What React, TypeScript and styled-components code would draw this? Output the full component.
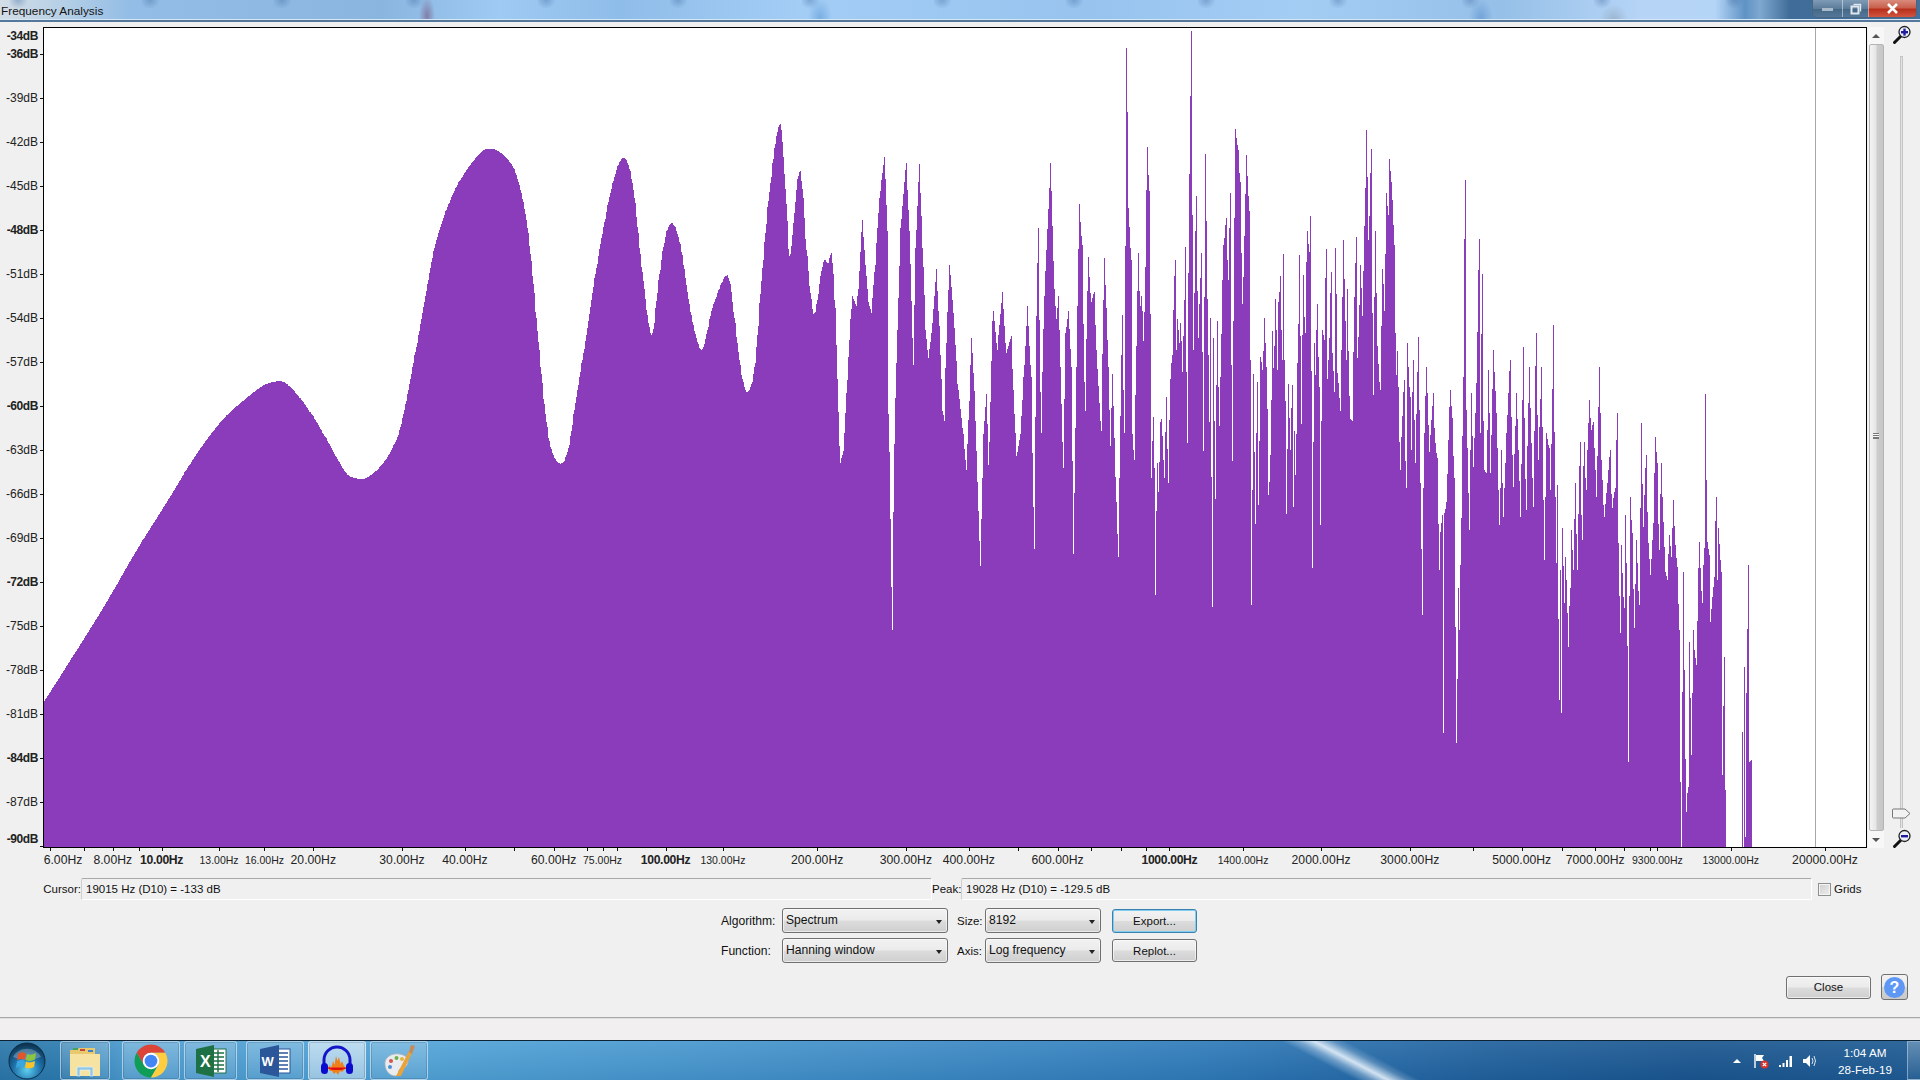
import React from "react";
import styled, { createGlobalStyle } from "styled-components";

const GlobalStyle = createGlobalStyle`
  html, body {
    margin: 0;
    padding: 0;
    width: 1920px;
    height: 1080px;
    overflow: hidden;
    background: #f0f0f0;
    font-family: "Liberation Sans", Arial, sans-serif;
    font-size: 12px;
    color: #111;
  }
  * { box-sizing: border-box; }
`;

// traced outline of the spectrum, [x, y] in the units of each trace
type Pt = [number, number];

const SMOOTH: Pt[] = [
  [7,1498],[60,1385],[120,1255],[180,1115],[240,985],[290,875],[340,785],[380,735],[410,703],[430,690],[455,688],
  [480,720],[510,775],[540,845],[570,915],[590,932],[610,930],[640,895],[665,835],[680,760],[700,620],[720,470],
  [740,330],[770,215],[800,145],[825,105],[840,98],[860,108],[885,150],[905,250],[920,420],[935,650],[950,830],
  [968,893],[985,865],[1000,740],[1020,570],[1040,390],[1065,210],[1087,122],[1105,175],[1120,350],[1141,570],
  [1155,430],[1168,320],[1181,287],[1195,340],[1215,510],[1232,603],[1242,580],[1258,490],[1283,418],[1295,510],
  [1310,670],[1322,712],[1335,640],[1350,380],[1365,170],[1382,36],[1392,200],[1399,368],[1408,260],[1420,155],
  [1432,370],[1445,515],[1458,420],[1465,380],[1472,388],[1479,367],[1485,500],
];

const MIDDLE: Pt[] = [
  [0,985],[10,950],[20,740],[30,560],[35,490],[45,520],[52,470],[62,265],[72,400],[80,510],[88,540],[98,400],[112,180],
  [125,80],[133,300],[137,840],[146,1478],[152,930],[158,690],[170,290],[185,97],[195,300],[205,695],[212,350],[222,100],
  [232,350],[240,590],[247,675],[257,600],[270,412],[278,580],[288,830],[292,860],[297,630],[307,398],[318,540],[330,750],
  [345,900],[354,1005],[362,800],[368,615],[375,720],[385,1040],[393,1290],[402,900],[410,780],[417,990],[427,565],
  [430,535],[440,650],[455,480],[465,660],[480,610],[485,770],[495,965],[505,900],[515,730],[525,520],[535,730],[544,1240],
  [550,550],[555,290],[563,895],[572,490],[590,97],[600,470],[606,560],[612,490],[625,1000],[632,600],[640,535],[648,700],
  [654,1255],[662,700],[670,220],[678,340],[686,830],[695,375],[703,510],[712,478],[718,650],[731,890],[740,377],[750,620],
  [757,935],[763,722],[772,1025],[779,1262],[790,548],[796,895],[803,-243],[808,230],[815,385],[818,900],[824,975],[830,640],
  [835,365],[840,520],[845,490],[851,625],[855,405],[860,50],[866,180],[868,545],[872,1030],[877,848],[880,1000],[883,1375],
  [888,985],[892,1070],[898,865],[901,855],[908,1030],[914,790],[919,1045],[925,735],[930,665],[938,383],[942,650],[946,560],
  [950,630],[954,572],[960,715],[963,610],[967,345],[972,925],[978,130],[980,-100],[983,-293],[988,250],[990,650],[997,195],
  [1003,615],[1012,365],[1018,950],[1023,72],[1030,500],[1034,865],[1038,555],[1042,1410],[1046,615],[1051,1090],[1056,565],
  [1062,875],[1066,730],[1071,445],[1075,340],[1081,260],[1087,445],[1093,185],[1098,980],[1107,-3],[1115,60],[1120,155],
  [1125,365],[1128,515],[1138,75],[1146,240],[1149,680],[1152,1405],[1158,722],[1163,1165],[1168,745],[1172,1110],[1178,670],
  [1184,710],[1189,555],[1192,630],[1198,825],[1201,1080],[1206,960],[1211,595],[1215,705],[1220,500],[1225,710],[1229,510],
  [1233,432],[1238,680],[1241,368],[1246,800],[1250,1135],[1256,750],[1261,945],[1266,755],[1269,1115],[1273,890],[1276,1020],
  [1282,690],[1287,370],[1292,870],[1297,430],[1302,600],[1308,300],[1314,360],[1318,255],[1323,1295],[1328,630],[1331,725],
  [1336,516],[1342,760],[1345,1168],[1351,590],[1356,620],[1361,352],[1366,735],[1370,615],[1375,420],[1380,660],[1384,775],
  [1388,350],[1394,720],[1401,830],[1410,325],[1418,680],[1420,470],[1428,855],[1435,860],[1440,495],[1446,315],[1450,675],
  [1458,400],[1463,550],[1471,170],[1474,0],[1481,325],[1487,57],[1493,785],[1499,300],[1505,640],[1512,770],[1520,410],
  [1525,535],[1530,185],[1535,250],[1538,87],[1545,155],[1552,340],[1557,725],[1562,655],
];

const TAIL: Pt[] = [
  [0,210],[5,110],[12,-60],[18,265],[22,-170],[30,-10],[33,150],[40,-120],[46,190],[55,-190],[62,250],[67,645],[72,100],
  [80,-100],[88,155],[100,-20],[105,130],[112,175],[118,510],[122,395],[127,345],[130,1000],[134,340],[140,305],[150,-30],
  [158,55],[162,235],[170,1030],[176,565],[178,690],[184,355],[190,-70],[195,-660],[200,30],[208,390],[214,-20],[220,200],
  [230,-50],[237,-483],[242,100],[246,-378],[252,210],[260,220],[266,-90],[272,220],[280,-150],[290,40],[298,375],[305,150],
  [310,350],[320,100],[330,-120],[340,260],[350,-20],[362,350],[370,-160],[378,330],[388,-100],[400,320],[408,-200],[415,180],
  [425,-100],[433,480],[440,100],[447,145],[452,270],[461,-225],[465,290],[470,490],[473,255],[477,900],[481,510],[484,940],
  [488,385],[493,610],[497,470],[500,540],[505,740],[510,565],[515,390],[520,510],[526,250],[532,510],[540,125],[546,420],
  [552,125],[558,270],[568,0],[574,90],[580,65],[590,290],[598,-100],[605,180],[612,350],[620,280],[630,150],[636,325],
  [645,265],[652,40],[655,430],[661,700],[664,435],[672,625],[676,345],[680,490],[686,1085],[690,290],[697,400],[703,685],
  [710,420],[717,615],[720,325],[724,70],[730,380],[738,165],[745,430],[752,525],[760,370],[766,110],[772,190],[777,450],
  [784,190],[790,365],[797,515],[802,540],[808,405],[815,470],[820,300],[826,435],[832,500],[838,690],[843,1340],[851,515],
  [854,810],[858,1235],[864,1160],[868,725],[875,1065],[880,690],[885,775],[890,795],[897,425],[900,505],[907,610],[912,445],
  [916,-18],[918,240],[920,410],[928,465],[931,665],[938,590],[943,530],[948,290],[951,540],[955,385],[962,480],[965,515],
  [967,1125],[973,770],[978,1341],[984,1341],[985,1320],[987,1341],[1020,1341],[1021,865],[1023,1341],[1026,995],[1029,1341],
  [1033,800],[1036,1310],[1040,880],[1045,495],[1048,1085],[1054,1080],[1056,1341],[1068,1341],[1069,1325],[1071,1341],
];

// rounds the low frequency humps off, they are curves in the picture
function catmullRom(pts: Pt[], steps: number): Pt[] {
  const out: Pt[] = [];
  for (let i = 0; i < pts.length - 1; i++) {
    const p0 = pts[Math.max(i - 1, 0)];
    const p1 = pts[i];
    const p2 = pts[i + 1];
    const p3 = pts[Math.min(i + 2, pts.length - 1)];
    for (let s = 0; s < steps; s++) {
      const t = s / steps;
      const blend = (a: number, b: number, c: number, d: number) =>
        0.5 * (2 * b + (c - a) * t + (2 * a - 5 * b + 4 * c - d) * t * t + (3 * b - a - 3 * c + d) * t * t * t);
      out.push([blend(p0[0], p1[0], p2[0], p3[0]), blend(p0[1], p1[1], p2[1], p3[1])]);
    }
  }
  out.push(pts[pts.length - 1]);
  return out;
}

// each trace has its own origin and scale
const place = (pts: Pt[], x0: number, sx: number, y0: number, sy: number): Pt[] =>
  pts.map(([x, y]) => [x0 + x / sx, y0 + y / sy]);

const OUTLINE: Pt[] = [
  ...place(catmullRom(SMOOTH, 5), 40, 1.867, 110, 2.53),
  ...place(MIDDLE, 840, 2.8, 130, 2.958),
  ...place(TAIL, 1400, 3, 400, 3),
];

function spectrumPath() {
  let d = "M43 848";
  let i = 0;
  for (let x = 43; x < 1760; x++) {
    const c = x + 0.5;
    while (i < OUTLINE.length - 2 && OUTLINE[i + 1][0] < c) i++;
    const [x1, y1] = OUTLINE[i];
    const [x2, y2] = OUTLINE[i + 1];
    const mid = c > x2 ? 848 : y1 + ((y2 - y1) * Math.max(c - x1, 0)) / (x2 - x1);
    // a one pixel column keeps the sharpest traced point, so thin spikes and notches survive
    let y = mid;
    for (const [px, py] of OUTLINE) {
      if (px >= x && px < x + 1 && Math.abs(py - mid) > Math.abs(y - mid)) y = py;
    }
    d += `V${y.toFixed(1)}H${x + 1}`;
  }
  return d + "V848Z";
}

const DB_TICKS = [-36, -39, -42, -45, -48, -51, -54, -57, -60, -63, -66, -69, -72, -75, -78, -81, -84, -87, -90];
const DB_BOLD = [-36, -48, -60, -72, -84, -90];
const dbY = (db: number) => 53.5 + ((-36 - db) / 3) * 44.05;

const freqX = (f: number) => 1169.4 + 503.9 * Math.log10(f / 1000);

const FREQ_TICKS = [
  6, 7, 8, 9, 10, 13, 16, 20, 30, 40, 50, 60, 70, 75, 80, 100, 130, 200, 300, 400, 500, 600, 700, 800, 900, 1000, 1400, 2000,
  3000, 4000, 5000, 6000, 7000, 8000, 9000, 9300, 13000, 20000,
];

type FreqLabel = { f: number; kind?: "bold" | "small"; x?: number };
const FREQ_LABELS: FreqLabel[] = [
  { f: 6, x: 63 }, { f: 8 }, { f: 10, kind: "bold" }, { f: 13, kind: "small" }, { f: 16, kind: "small" }, { f: 20 },
  { f: 30 }, { f: 40 }, { f: 60 }, { f: 75, kind: "small" }, { f: 100, kind: "bold" }, { f: 130, kind: "small" },
  { f: 200 }, { f: 300 }, { f: 400 }, { f: 600 }, { f: 1000, kind: "bold" }, { f: 1400, kind: "small" }, { f: 2000 },
  { f: 3000 }, { f: 5000 }, { f: 7000 }, { f: 9300, kind: "small" }, { f: 13000, kind: "small" }, { f: 20000 },
];

// Window chrome
const Screen = styled.div`
  width: 1920px;
  height: 1080px;
  display: flex;
  flex-direction: column;
  overflow: hidden;
`;

const TitleBar = styled.div`
  height: 22px;
  flex: none;
  display: flex;
  justify-content: space-between;
  padding-left: 1px;
  border-bottom: 2px solid #54789c;
  box-shadow: inset 0 -1px 0 #d7e6f3;
  background:
    radial-gradient(ellipse 8px 20px at 427px 16px, rgba(110, 50, 90, 0.45), transparent),
    radial-gradient(ellipse 12px 20px at 820px 18px, rgba(60, 130, 200, 0.4), transparent),
    radial-gradient(ellipse 12px 20px at 1481px 18px, rgba(60, 120, 190, 0.4), transparent),
    radial-gradient(ellipse 14px 16px at 1614px 20px, rgba(120, 130, 140, 0.35), transparent),
    radial-gradient(ellipse 10px 9px at 8px 0, rgba(60, 105, 160, 0.38), transparent) 10px 0 / 132px 100% repeat-x,
    linear-gradient(90deg, #d3dde6 0, #b7d0e6 60px, #93bde6 130px, #8ab5df 380px, #9ecaf3 500px, #8fbde9 620px, #a3cdf5 800px,
      #97c3ee 1090px, #a4cdf4 1300px, #96c0e8 1500px, #b5d4f6 1640px, #b5d5f7 1715px, #5f93c5 1745px, #7fa8cf 1760px, #3f6c98 1790px, #44719b 1920px);
`;

const TitleText = styled.span`
  font-size: 11.8px;
  line-height: 22px;
  color: #141414;
`;

const WindowButtons = styled.div`
  display: flex;
  height: 18px;
  margin-right: 3px;
  border: 1px solid #4a6580;
  border-top: none;
  border-radius: 0 0 5px 5px;
  overflow: hidden;
`;

const WindowButton = styled.div<{ $w: number; $close?: boolean }>`
  width: ${(p) => p.$w}px;
  display: flex;
  align-items: center;
  justify-content: center;
  border-left: 1px solid rgba(225, 235, 245, 0.55);
  background: ${(p) =>
    p.$close
      ? "linear-gradient(180deg, #d98a7c 0, #c9604d 45%, #b8301b 55%, #d2553f 100%)"
      : "linear-gradient(180deg, #7f9bb6 0, #5c7c9b 50%, #466887 55%, #54779a 100%)"};
  &:first-child { border-left: none; }
`;

const MinimizeBar = styled.div`
  width: 11px;
  height: 3px;
  background: #a9bacb;
  margin-top: 2px;
`;

const Body = styled.div`
  flex: 1;
  display: flex;
  flex-direction: column;
  padding-top: 5px;
  background: #f0f0f0;
`;

// Plot row: dB ruler | plot | scrollbar | zoom slider
const PlotRow = styled.div`
  height: 821px;
  flex: none;
  display: flex;
`;

const DbRuler = styled.div`
  width: 43px;
  flex: none;
  position: relative;
`;

const DbLabel = styled.span<{ $bold?: boolean }>`
  position: absolute;
  right: 5px;
  font-size: 12px;
  line-height: 14px;
  font-weight: ${(p) => (p.$bold ? 700 : 400)};
  letter-spacing: ${(p) => (p.$bold ? "-0.4px" : "0")};
  white-space: nowrap;
  color: #222;
`;

const DbTick = styled.div`
  position: absolute;
  right: 0;
  width: 3px;
  height: 1px;
  background: #111;
`;

const Plot = styled.div`
  width: 1824px;
  flex: none;
  position: relative;
  background: #fff;
  border: 1px solid #000;
`;

const PlotSvg = styled.svg`
  display: block;
  width: 100%;
  height: 100%;
`;

const CursorLine = styled.div`
  position: absolute;
  top: 0;
  bottom: 0;
  left: 1771px;
  width: 1px;
  background: #a8a8a8;
`;

const ScrollBar = styled.div`
  width: 16px;
  flex: none;
  margin-left: 1px;
  display: flex;
  flex-direction: column;
  align-items: center;
  background: #f7f7f7;
`;

const ScrollArrow = styled.div<{ $down?: boolean }>`
  height: 17px;
  flex: none;
  display: flex;
  align-items: center;
  justify-content: center;
  &::after {
    content: "";
    border-left: 4px solid transparent;
    border-right: 4px solid transparent;
    ${(p) => (p.$down ? "border-top: 4px solid #555;" : "border-bottom: 4px solid #555;")}
  }
`;

const ScrollThumb = styled.div`
  flex: 1;
  width: 15px;
  display: flex;
  align-items: center;
  justify-content: center;
  padding-bottom: 4px;
  border: 1px solid #b5b5b5;
  border-radius: 2px;
  background: linear-gradient(90deg, #f4f4f4 0, #e6e6e6 45%, #cdcdcd 55%, #c6c6c6 100%);
`;

const ThumbGrip = styled.div`
  width: 6px;
  height: 6px;
  border-top: 1px solid #777;
  border-bottom: 1px solid #777;
  background: linear-gradient(#f4f4f4 0 1px, #777 1px 3px, #f4f4f4 3px);
  background-size: 100% 2px;
`;

const ZoomColumn = styled.div`
  flex: 1;
  display: flex;
  flex-direction: column;
  align-items: center;
  padding: 0 1px 0 0;
`;

const ZoomIcon = styled.svg`
  width: 20px;
  height: 20px;
  flex: none;
  &:first-child { margin: -2px 0 2px; }
  &:last-child { margin: 1px 0 -1px; }
`;

const SliderTrack = styled.div`
  flex: 1;
  width: 3px;
  margin: 9px 0 0;
  position: relative;
  background: #e3e3e3;
  border: 1px solid #c4c4c4;
  border-bottom: none;
`;

const SliderThumb = styled.svg`
  position: absolute;
  left: -9px;
  bottom: 9px;
  width: 19px;
  height: 11px;
`;

// Frequency ruler
const FreqRuler = styled.div`
  height: 27px;
  flex: none;
  position: relative;
`;

const FreqTick = styled.div`
  position: absolute;
  top: 0;
  width: 1px;
  height: 3px;
  background: #111;
`;

const FreqText = styled.span<{ $kind?: "bold" | "small" }>`
  position: absolute;
  top: 5px;
  line-height: 14px;
  transform: translateX(-50%);
  white-space: nowrap;
  color: #222;
  font-size: ${(p) => (p.$kind === "small" ? "10.5px" : "12.2px")};
  font-weight: ${(p) => (p.$kind === "bold" ? 700 : 400)};
  letter-spacing: ${(p) => (p.$kind === "bold" ? "-0.35px" : "0")};
`;

// Cursor / Peak readouts
const InfoRow = styled.div`
  height: 22px;
  flex: none;
  margin-top: 3px;
  display: flex;
  align-items: center;
  padding-left: 43px;
`;

const InfoLabel = styled.span<{ $w: number }>`
  width: ${(p) => p.$w}px;
  flex: none;
  font-size: 11.5px;
  white-space: nowrap;
  text-align: right;
`;

const InfoField = styled.div`
  width: 851px;
  height: 22px;
  flex: none;
  padding-left: 4px;
  font-size: 11.5px;
  line-height: 20px;
  border: 1px solid #fff;
  border-top-color: #a9a9a9;
  border-left-color: #cfcfcf;
  border-radius: 2px;
`;

const GridsToggle = styled.label`
  display: flex;
  align-items: center;
  gap: 3px;
  margin-left: 6px;
  font-size: 11.5px;
`;

const CheckBox = styled.div`
  width: 13px;
  height: 13px;
  border: 1px solid #8e8f8f;
  box-shadow: inset 0 0 0 1px #f4f4f4;
  background: linear-gradient(135deg, #cfcfcf, #eee);
`;

// Analysis controls
const Controls = styled.div`
  margin-top: 8px;
  margin-left: 721px;
  flex: none;
  display: grid;
  grid-template-columns: 61px 166px 37px 116px 85px;
  grid-auto-rows: 25px;
  row-gap: 5px;
  width: 475px;
  align-items: center;
`;

const ControlLabel = styled.span<{ $inset?: boolean }>`
  padding-left: ${(p) => (p.$inset ? 9 : 0)}px;
  font-size: ${(p) => (p.$inset ? 11.5 : 12.1)}px;
  white-space: nowrap;
`;

const DropDown = styled.div`
  height: 25px;
  display: flex;
  align-items: center;
  justify-content: space-between;
  padding: 0 3px 2px 3px;
  font-size: 12.1px;
  border: 1px solid #707070;
  border-radius: 3px;
  background: linear-gradient(180deg, #f2f2f2 0, #ebebeb 48%, #dcdcdc 52%, #cfcfcf 100%);
  box-shadow: inset 0 0 0 1px rgba(255, 255, 255, 0.55);
  &::after {
    content: "";
    margin: 4px 2px 0 0;
    border-left: 3.5px solid transparent;
    border-right: 3.5px solid transparent;
    border-top: 4px solid #222;
  }
`;

const PushButton = styled.div<{ $focus?: boolean; $w?: number }>`
  height: ${(p) => (p.$focus ? 24 : 23)}px;
  width: ${(p) => p.$w ?? 85}px;
  margin-left: ${(p) => (p.$w ? 0 : 11)}px;
  display: flex;
  align-items: center;
  justify-content: center;
  font-size: 11.5px;
  border: 1px solid ${(p) => (p.$focus ? "#3c7fb1" : "#707070")};
  border-radius: 3px;
  background: linear-gradient(180deg, #f2f2f2 0, #ebebeb 48%, #dcdcdc 52%, #cfcfcf 100%);
  box-shadow: inset 0 0 0 1px ${(p) => (p.$focus ? "#7fd0ee" : "rgba(255, 255, 255, 0.6)")};
`;

const Footer = styled.div`
  margin-top: 11px;
  flex: none;
  display: flex;
  align-items: center;
  justify-content: flex-end;
  gap: 10px;
  padding-right: 12px;
`;

const HelpButton = styled.div`
  width: 27px;
  height: 26px;
  display: flex;
  align-items: center;
  justify-content: center;
  border: 1px solid #707070;
  border-radius: 3px;
  background: linear-gradient(180deg, #f2f2f2 0, #ebebeb 48%, #d4d4d4 52%, #c9c9c9 100%);
`;

const HelpDisc = styled.div`
  width: 21px;
  height: 21px;
  border-radius: 50%;
  background: #5e98f4;
  color: #fff;
  font-size: 16px;
  font-weight: 700;
  line-height: 21px;
  text-align: center;
`;

const StatusStrip = styled.div`
  height: 23px;
  flex: none;
  border-top: 1px solid #a6a6a6;
  box-shadow: inset 0 1px 0 #e0e0e0;
  background: #f1efef;
`;

// Taskbar
const TaskBar = styled.div`
  height: 40px;
  flex: none;
  display: flex;
  align-items: stretch;
  border-top: 1px solid #0d2436;
  color: #fff;
  background:
    linear-gradient(27.5deg, transparent 626px, rgba(235, 245, 255, 0.35) 634px, rgba(240, 248, 255, 0.85) 641px, rgba(255, 255, 255, 0.2) 650px, transparent 656px),
    linear-gradient(180deg, rgba(255, 255, 255, 0.08), rgba(0, 30, 70, 0.08)),
    linear-gradient(90deg, #2b77a9 0, #2c7cb0 60px, #4d9dd1 130px, #52a4d8 420px, #3e8cc6 900px, #2f7cba 1200px, #2a72b0 1300px, #20609c 1500px, #1a568f 1700px, #1e5b93 1920px);
`;

const StartSlot = styled.div`
  width: 60px;
  flex: none;
  display: flex;
  align-items: center;
  justify-content: center;
  padding-right: 6px;
`;

const TaskButton = styled.div<{ $w: number; $gap: number; $active?: boolean }>`
  width: ${(p) => p.$w}px;
  margin-left: ${(p) => p.$gap}px;
  flex: none;
  display: flex;
  align-items: center;
  justify-content: center;
  border: 1px solid rgba(225, 240, 250, 0.55);
  border-radius: 3px;
  box-shadow: inset 0 0 0 1px rgba(20, 60, 90, 0.2);
  background: ${(p) =>
    p.$active
      ? "linear-gradient(180deg, rgba(255,255,255,.6), rgba(255,255,255,.42))"
      : "linear-gradient(180deg, rgba(255,255,255,.22), rgba(255,255,255,.08))"};
`;

const TaskIcon = styled.svg`
  width: 36px;
  height: 36px;
`;

const TaskLetter = styled.text`
  font-family: "Liberation Sans", Arial, sans-serif;
  font-weight: 700;
  fill: #fff;
`;

const Tray = styled.div`
  margin-left: auto;
  display: flex;
  align-items: center;
`;

const TrayIcon = styled.svg<{ $gap: number }>`
  width: 16px;
  height: 16px;
  margin-left: ${(p) => p.$gap}px;
`;

const Clock = styled.div`
  width: 84px;
  margin-left: 6px;
  text-align: center;
  font-size: 11.7px;
  line-height: 17px;
`;

const ShowDesktop = styled.div`
  width: 13px;
  align-self: stretch;
  border: 1px solid rgba(190, 215, 235, 0.55);
  border-right: none;
  background: linear-gradient(180deg, rgba(255, 255, 255, 0.25), rgba(255, 255, 255, 0.05));
`;

const MagnifierIcon = ({ minus }: { minus?: boolean }) => (
  <ZoomIcon viewBox="0 0 20 20">
    <path d="M9 11 L2.5 17.5" stroke="#111" strokeWidth="3" strokeLinecap="round" />
    <circle cx="12.5" cy="7" r="5.5" fill="#eef1fb" stroke="#222" strokeWidth="1.3" />
    <rect x="9" y="6" width="7" height="2.4" fill="#1d1d9e" />
    {!minus && <rect x="11.3" y="3.6" width="2.4" height="7" fill="#1d1d9e" />}
  </ZoomIcon>
);

const ExplorerIcon = () => (
  <TaskIcon viewBox="0 0 36 36">
    <path d="M3 7 H10 L12 5 H28 V11 H33 V33 H3 Z" fill="#e9c96d" />
    <path d="M3 11 H33 V32 Q33 33 32 33 H4 Q3 33 3 32 Z" fill="#f7e3a1" />
    <rect x="6" y="5" width="5" height="2" fill="#46a35b" />
    <rect x="13" y="6" width="5" height="2" fill="#c9473a" />
    <rect x="21" y="7" width="5" height="2" fill="#3d80c4" />
    <path d="M10 33 V24 H26 V33 H23 V27 H13 V33 Z" fill="#8ec6e6" stroke="#dff1fb" strokeWidth="0.7" />
  </TaskIcon>
);

const ChromeIcon = () => (
  <TaskIcon viewBox="0 0 48 48">
    <path d="M43.05 13 A22 22 0 0 0 4.95 13 L14.5 29.5 A11 11 0 0 1 24 13 Z" fill="#db4437" />
    <path d="M4.95 13 A22 22 0 0 0 24 46 L33.5 29.5 A11 11 0 0 1 14.5 29.5 Z" fill="#0f9d58" />
    <path d="M24 46 A22 22 0 0 0 43.05 13 L24 13 A11 11 0 0 1 33.5 29.5 Z" fill="#ffcd40" />
    <circle cx="24" cy="24" r="11" fill="#fff" />
    <circle cx="24" cy="24" r="8.5" fill="#4285f4" />
  </TaskIcon>
);

const ExcelIcon = () => (
  <TaskIcon viewBox="0 0 36 36">
    <rect x="18" y="6" width="15" height="24" fill="#fff" stroke="#1e6f43" strokeWidth="1" />
    <path d="M20 10 H31 M20 14 H31 M20 18 H31 M20 22 H31 M20 26 H31 M25 7 V29" stroke="#1e6f43" strokeWidth="1.4" />
    <path d="M3 6 L21 2 V34 L3 30 Z" fill="#1e7145" />
    <TaskLetter x="7" y="24" fontSize="16">X</TaskLetter>
  </TaskIcon>
);

const WordIcon = () => (
  <TaskIcon viewBox="0 0 36 36">
    <rect x="18" y="6" width="15" height="24" fill="#fff" stroke="#2b579a" strokeWidth="1" />
    <path d="M21 10 H31 M21 14 H31 M21 18 H31 M21 22 H31 M21 26 H31" stroke="#2b579a" strokeWidth="1.4" />
    <path d="M3 6 L22 2 V34 L3 30 Z" fill="#2b579a" />
    <TaskLetter x="4.5" y="23" fontSize="13">W</TaskLetter>
  </TaskIcon>
);

const AudacityIcon = () => (
  <TaskIcon viewBox="0 0 36 36">
    <path d="M5 22 V17 A13 13 0 0 1 31 17 V22" fill="none" stroke="#1414c8" strokeWidth="3" />
    <rect x="2" y="20" width="7" height="11" rx="3.5" fill="#0b0bd0" />
    <rect x="27" y="20" width="7" height="11" rx="3.5" fill="#0b0bd0" />
    <path
      d="M9 25 L11 22 L12 26 L14 18 L15.5 22 L17 13 L18.5 18 L20 14 L21.5 21 L23 18 L25 23 L27 25 L25 27 L23 29 L21 28 L19 32 L17 29 L15 31 L13 28 L11 28 Z"
      fill="#f08018"
    />
    <path d="M9 25 H27 L22 26.5 H14 Z" fill="#e31010" stroke="#e31010" strokeWidth="1.2" />
  </TaskIcon>
);

const PaintIcon = () => (
  <TaskIcon viewBox="0 0 36 36">
    <path
      d="M4 22 C3 14 11 10 18 11 C25 12 29 16 26 22 C24 26 20 24 18 27 C17 30 19 32 15 33 C9 33 5 29 4 22 Z"
      fill="#e9ecef"
      stroke="#aab4bc"
      strokeWidth="0.8"
    />
    <circle cx="10" cy="18" r="2" fill="#d9534f" />
    <circle cx="15.5" cy="15" r="2" fill="#6fb04a" />
    <circle cx="21" cy="16" r="2" fill="#e4b63f" />
    <circle cx="9" cy="24" r="2" fill="#4f8fd0" />
    <path d="M15 33 L28 8 L31 10 L20 33 Z" fill="#e8a33a" />
    <path d="M28 9 L30 2 L34 3 L31 11 Z" fill="#c58b58" />
  </TaskIcon>
);

const StartOrb = () => (
  <svg width="38" height="38" viewBox="0 0 38 38">
    <defs>
      <radialGradient id="orb" cx="50%" cy="75%" r="70%">
        <stop offset="0" stopColor="#5fd0f0" />
        <stop offset="0.55" stopColor="#1d6fa8" />
        <stop offset="1" stopColor="#0e3654" />
      </radialGradient>
    </defs>
    <circle cx="19" cy="19" r="18" fill="url(#orb)" stroke="#0b2c44" strokeWidth="1" />
    <path d="M5 15 A15 13 0 0 1 33 15 Q19 21 5 15 Z" fill="rgba(255,255,255,.25)" />
    <path d="M10 12 Q14 9 18 11.5 L17 18 Q13 16 9 18.5 Z" fill="#e2552b" />
    <path d="M19 12 Q23 14 28 11 L27 17.5 Q22.5 20 18 18 Z" fill="#8cc63f" />
    <path d="M9 19.5 Q13 17 17 19 L16 25.5 Q12 23.5 8 26 Z" fill="#3aa6e0" />
    <path d="M18 19.5 Q22 21.5 27 19 L26 25 Q21.5 27.5 17 25.5 Z" fill="#f9c32b" />
  </svg>
);

export default function App() {
  const outline = spectrumPath();
  return (
    <Screen>
      <GlobalStyle />
      <TitleBar>
        <TitleText>Frequency Analysis</TitleText>
        <WindowButtons>
          <WindowButton $w={29}>
            <MinimizeBar />
          </WindowButton>
          <WindowButton $w={26}>
            <svg width="12" height="12" viewBox="0 0 12 12">
              <path d="M3.5 1.5 H10.5 V8.5" fill="none" stroke="#dfe7ee" strokeWidth="1.4" />
              <rect x="1.5" y="3.5" width="7" height="7" fill="none" stroke="#dfe7ee" strokeWidth="2" />
            </svg>
          </WindowButton>
          <WindowButton $w={48} $close>
            <svg width="13" height="11" viewBox="0 0 13 11">
              <path d="M2 1 L11 10 M11 1 L2 10" stroke="#fff" strokeWidth="2.6" />
            </svg>
          </WindowButton>
        </WindowButtons>
      </TitleBar>

      <Body>
        <PlotRow>
          <DbRuler>
            <DbLabel $bold style={{ top: 36 - 27 - 7 }}>-34dB</DbLabel>
            {DB_TICKS.map((db) => (
              <React.Fragment key={db}>
                <DbLabel $bold={DB_BOLD.includes(db)} style={{ top: (db === -90 ? 838.7 : dbY(db)) - 27 - 7 }}>
                  {db}dB
                </DbLabel>
                <DbTick style={{ top: Math.round(dbY(db) - 27) }} />
              </React.Fragment>
            ))}
          </DbRuler>
          <Plot>
            <PlotSvg viewBox="44 28 1822 819" preserveAspectRatio="none">
              <path d={outline} fill="#8b3cbb" shapeRendering="crispEdges" />
            </PlotSvg>
            <CursorLine />
          </Plot>
          <ScrollBar>
            <ScrollArrow />
            <ScrollThumb>
              <ThumbGrip />
            </ScrollThumb>
            <ScrollArrow $down />
          </ScrollBar>
          <ZoomColumn>
            <MagnifierIcon />
            <SliderTrack>
              <SliderThumb viewBox="0 0 19 11">
                <path d="M1.5 1 H13 L18 5.5 L13 10 H1.5 Q0.5 10 0.5 9 V2 Q0.5 1 1.5 1 Z" fill="#f2f2f2" stroke="#777" />
              </SliderThumb>
            </SliderTrack>
            <MagnifierIcon minus />
          </ZoomColumn>
        </PlotRow>

        <FreqRuler>
          {FREQ_TICKS.map((f) => (
            <FreqTick key={f} style={{ left: Math.round(freqX(f)) }} />
          ))}
          {FREQ_LABELS.map(({ f, kind, x }) => (
            <FreqText key={f} $kind={kind} style={{ left: x ?? freqX(f) }}>
              {f}.00Hz
            </FreqText>
          ))}
        </FreqRuler>

        <InfoRow>
          <InfoLabel $w={38}>Cursor:</InfoLabel>
          <InfoField>19015 Hz (D10) = -133 dB</InfoField>
          <InfoLabel $w={29}>Peak:</InfoLabel>
          <InfoField>19028 Hz (D10) = -129.5 dB</InfoField>
          <GridsToggle>
            <CheckBox />
            Grids
          </GridsToggle>
        </InfoRow>

        <Controls>
          <ControlLabel>Algorithm:</ControlLabel>
          <DropDown>Spectrum</DropDown>
          <ControlLabel $inset>Size:</ControlLabel>
          <DropDown>8192</DropDown>
          <PushButton $focus>Export...</PushButton>
          <ControlLabel>Function:</ControlLabel>
          <DropDown>Hanning window</DropDown>
          <ControlLabel $inset>Axis:</ControlLabel>
          <DropDown>Log frequency</DropDown>
          <PushButton>Replot...</PushButton>
        </Controls>

        <Footer>
          <PushButton $w={85}>Close</PushButton>
          <HelpButton>
            <HelpDisc>?</HelpDisc>
          </HelpButton>
        </Footer>
      </Body>

      <StatusStrip />

      <TaskBar>
        <StartSlot>
          <StartOrb />
        </StartSlot>
        <TaskButton $w={50} $gap={0}><ExplorerIcon /></TaskButton>
        <TaskButton $w={58} $gap={12}><ChromeIcon /></TaskButton>
        <TaskButton $w={53} $gap={4}><ExcelIcon /></TaskButton>
        <TaskButton $w={58} $gap={9}><WordIcon /></TaskButton>
        <TaskButton $w={58} $gap={4} $active><AudacityIcon /></TaskButton>
        <TaskButton $w={58} $gap={4}><PaintIcon /></TaskButton>
        <Tray>
          <TrayIcon $gap={0} viewBox="0 0 16 16">
            <path d="M4 10 L8 6 L12 10 Z" fill="#fff" />
          </TrayIcon>
          <TrayIcon $gap={8} viewBox="0 0 16 16">
            <path d="M2 1 V15" stroke="#fff" strokeWidth="1.4" />
            <path d="M3 2 H11 L9 5 L11 8 H3 Z" fill="#fff" />
            <circle cx="11.5" cy="11.5" r="4" fill="#d8332a" />
            <path d="M9.8 9.8 L13.2 13.2 M13.2 9.8 L9.8 13.2" stroke="#fff" strokeWidth="1.2" />
          </TrayIcon>
          <TrayIcon $gap={9} viewBox="0 0 16 16">
            <path d="M1 14 V12 H3 V14 Z M4.5 14 V10 H6.5 V14 Z M8 14 V7 H10 V14 Z M11.5 14 V3 H14 V14 Z" fill="#fff" />
          </TrayIcon>
          <TrayIcon $gap={7} viewBox="0 0 16 16">
            <path d="M2 6 H5 L9 2 V14 L5 10 H2 Z" fill="#fff" />
            <path d="M11 5 Q13 8 11 11 M13 3 Q16 8 13 13" fill="none" stroke="#d9e6f2" strokeWidth="1" />
          </TrayIcon>
          <Clock>
            1:04 AM
            <br />
            28-Feb-19
          </Clock>
          <ShowDesktop />
        </Tray>
      </TaskBar>
    </Screen>
  );
}
